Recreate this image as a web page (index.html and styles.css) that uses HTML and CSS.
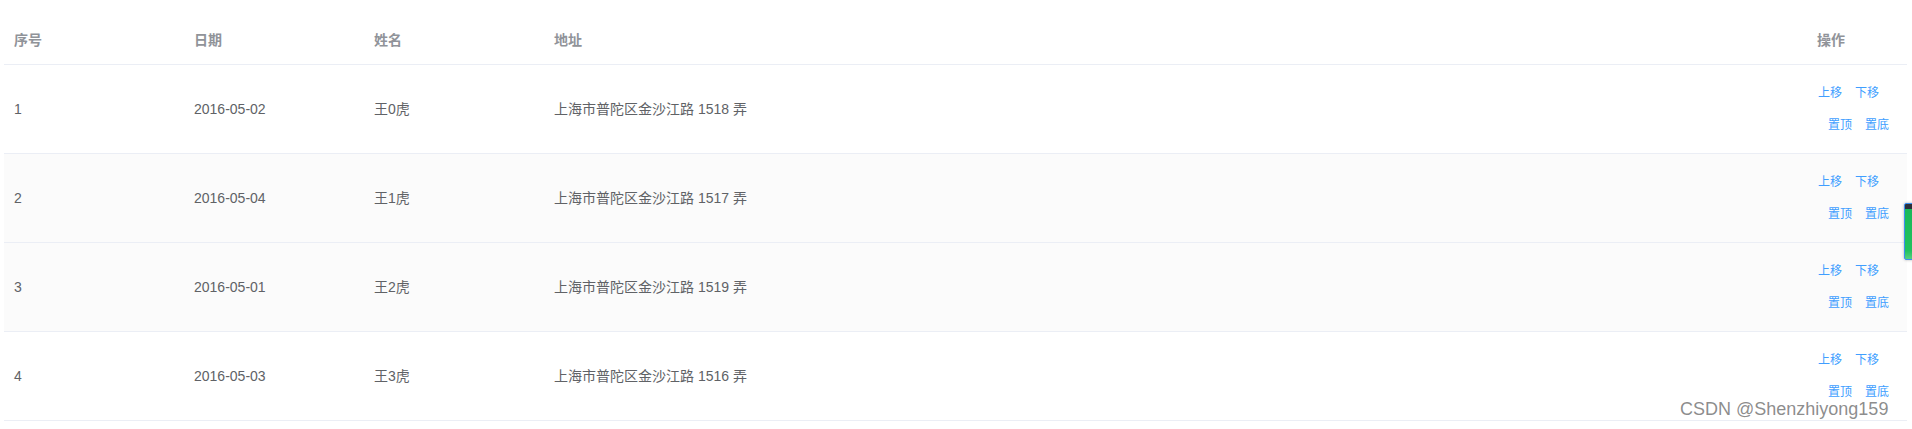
FILE: index.html
```html
<!DOCTYPE html>
<html lang="zh-CN">
<head>
<meta charset="utf-8">
<title>表格</title>
<link rel="stylesheet" href="styles.css">
</head>
<body>
<div class="page">
  <table class="grid">
    <colgroup>
      <col class="c-idx"><col class="c-date"><col class="c-name"><col class="c-addr"><col class="c-op">
    </colgroup>
    <thead>
      <tr><th>序号</th><th>日期</th><th>姓名</th><th>地址</th><th>操作</th></tr>
    </thead>
    <tbody>
      <tr>
        <td>1</td><td>2016-05-02</td><td>王0虎</td><td>上海市普陀区金沙江路 1518 弄</td>
        <td><div class="ops"><span class="btn">上移</span><span class="btn">下移</span><span class="btn">置顶</span><span class="btn">置底</span></div></td>
      </tr>
      <tr class="stripe">
        <td>2</td><td>2016-05-04</td><td>王1虎</td><td>上海市普陀区金沙江路 1517 弄</td>
        <td><div class="ops"><span class="btn">上移</span><span class="btn">下移</span><span class="btn">置顶</span><span class="btn">置底</span></div></td>
      </tr>
      <tr class="stripe">
        <td>3</td><td>2016-05-01</td><td>王2虎</td><td>上海市普陀区金沙江路 1519 弄</td>
        <td><div class="ops"><span class="btn">上移</span><span class="btn">下移</span><span class="btn">置顶</span><span class="btn">置底</span></div></td>
      </tr>
      <tr>
        <td>4</td><td>2016-05-03</td><td>王3虎</td><td>上海市普陀区金沙江路 1516 弄</td>
        <td><div class="ops"><span class="btn">上移</span><span class="btn">下移</span><span class="btn">置顶</span><span class="btn">置底</span></div></td>
      </tr>
    </tbody>
  </table>
  <div class="side-widget"></div>
  <div class="watermark">CSDN @Shenzhiyong159</div>
</div>
</body>
</html>
```

FILE: styles.css
```css
html, body {
  margin: 0;
  padding: 0;
  background: #fff;
  overflow: hidden;
}
body {
  font-family: "Liberation Sans", "Noto Sans CJK SC", sans-serif;
  font-size: 14px;
  color: #606266;
}
.page {
  position: relative;
  width: 1912px;
  height: 429px;
  padding: 17px 5px 0 4px;
  box-sizing: border-box;
}
.grid {
  width: 1903px;
  table-layout: fixed;
  border-collapse: collapse;
  border-spacing: 0;
}
.c-idx, .c-date, .c-name { width: 180px; }
.c-op { width: 100px; }
.grid th, .grid td {
  padding: 12px 10px;
  line-height: 23px;
  text-align: left;
  vertical-align: middle;
  border-bottom: 1px solid #ebeef5;
  white-space: nowrap;
  overflow: hidden;
}
.grid th {
  color: #909399;
  font-weight: 700;
}
.grid td { color: #606266; }
.stripe td { background: #fbfbfb; }
.ops {
  display: flex;
  flex-wrap: wrap;
  column-gap: 1px;
  width: 80px;
}
.btn {
  display: block;
  height: 32px;
  line-height: 30px;
  border: 1px solid transparent;
  box-sizing: border-box;
  font-size: 12px;
  color: #409eff;
  margin-left: 10px;
}
.btn:first-child { margin-left: 0; }
.side-widget {
  position: absolute;
  left: 1904px;
  top: 203px;
  width: 12px;
  height: 57px;
  box-sizing: border-box;
  border: 1px solid #3b8ef0;
  border-radius: 2px;
  background: linear-gradient(#2b2f3a 0, #2b2f3a 5px, #18b85a 5px, #21c25f 85%, #55d07f 100%);
  box-shadow: 0 0 3px rgba(0,0,0,0.3);
}
.watermark {
  position: absolute;
  left: 1680px;
  top: 399px;
  font-family: "Liberation Sans", sans-serif;
  font-size: 18px;
  line-height: 21px;
  color: rgba(120,120,120,0.85);
  white-space: nowrap;
}
```
